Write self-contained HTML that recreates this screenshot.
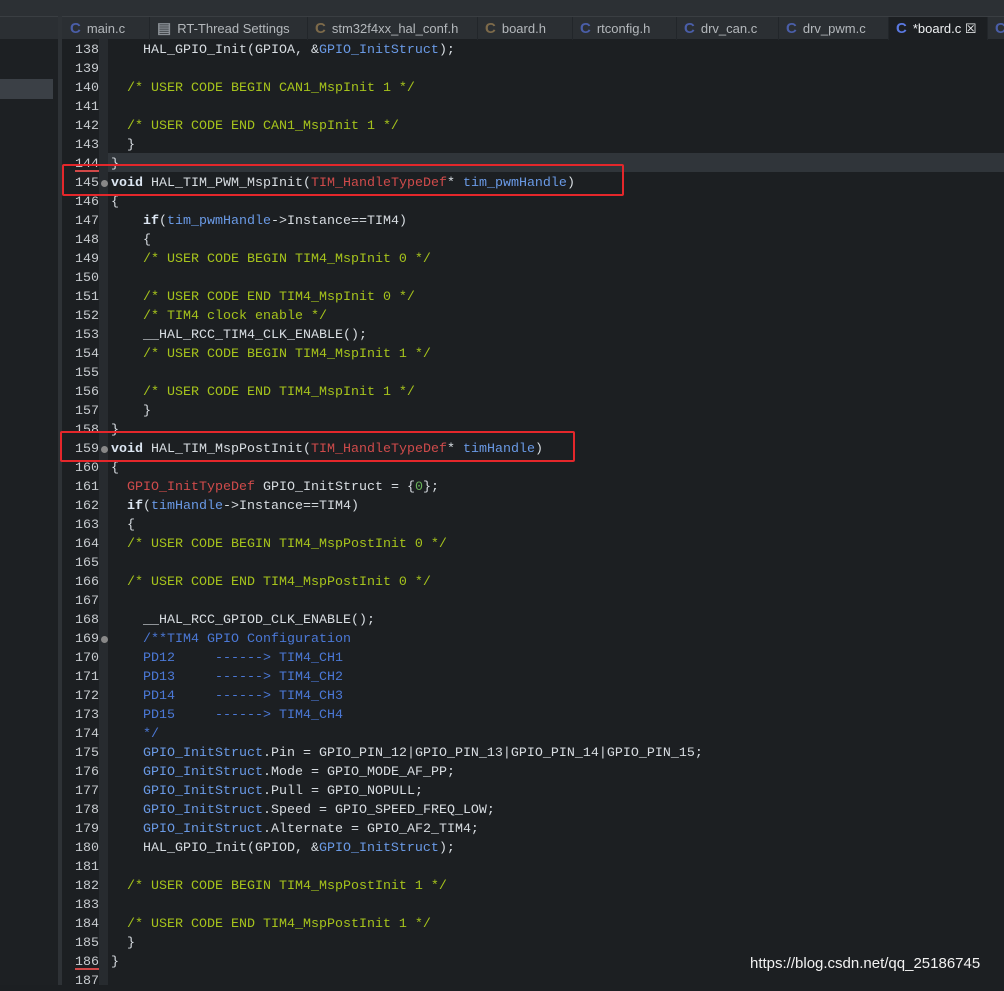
<!DOCTYPE html>
<html><head><meta charset="utf-8"><style>
*{margin:0;padding:0;box-sizing:border-box}
body{width:1004px;height:985px;background:#1c1f22;overflow:hidden;position:relative;font-family:"Liberation Mono",monospace}
#tool{position:absolute;left:0;top:0;width:1004px;height:16px;background:#2c3034}
#tabs{position:absolute;left:0;top:16px;width:1004px;height:23px;background:#2b2f33;border-top:1px solid #3a3e42}
.tab{position:absolute;top:0;height:23px;font:13px "Liberation Sans",sans-serif;color:#b4b8bc;line-height:23px;border-right:1px solid #22262a;white-space:nowrap}
.tab b{color:#4a5ea8;font:bold 15px "Liberation Sans",sans-serif;margin:0 6px 0 7px}
#left{position:absolute;left:0;top:39px;width:58px;height:946px;background:#1d2023}
#sep{position:absolute;left:58px;top:16px;width:4px;height:969px;background:#2e3236}
#sel{position:absolute;left:0;top:79px;width:53px;height:20px;background:#3b4046}
#gut{position:absolute;left:99px;top:39px;width:9px;height:946px;background:#272b2f}
#cur{position:absolute;left:108px;top:153px;width:896px;height:19px;background:#30353a}
#code{position:absolute;left:0;top:41px;font-size:13.33px;line-height:19px;color:#d8dde2}
.l{height:19px;position:relative;overflow:visible}
.n{position:absolute;left:0;top:0;width:99px;text-align:right;color:#c8ccd0}
.t{position:absolute;left:111px;top:0;white-space:pre}
.c{color:#a6c31c}.k{color:#dce6f2;font-weight:bold}.r{color:#cf4b4b}.b{color:#6a9ae6}.d{color:#4b78d6}.g{color:#69b25a}
.box{position:absolute;border:2px solid #e4272b;border-radius:2px}
#wm{position:absolute;left:750px;top:955px;font:15px "Liberation Sans",sans-serif;color:#f2f2f2}
.fold{position:absolute;left:101px;top:6px;width:7px;height:7px;border-radius:50%;background:#888}
</style></head><body>
<div id="tool"></div>
<div id="tabs">
<div class="tab" style="left:63px;width:87px"><b>C</b>main.c</div>
<div class="tab" style="left:150px;width:158px"><b style="color:#8a8f95">▤</b>RT-Thread Settings</div>
<div class="tab" style="left:308px;width:170px"><b style="color:#7d6a4a">C</b>stm32f4xx_hal_conf.h</div>
<div class="tab" style="left:478px;width:95px"><b style="color:#7d6a4a">C</b>board.h</div>
<div class="tab" style="left:573px;width:104px"><b>C</b>rtconfig.h</div>
<div class="tab" style="left:677px;width:102px"><b>C</b>drv_can.c</div>
<div class="tab" style="left:779px;width:110px"><b>C</b>drv_pwm.c</div>
<div class="tab" style="left:889px;width:99px;background:#1c1f22;color:#eef0f2"><b style="color:#5a78e0">C</b>*board.c ☒</div>
<div class="tab" style="left:988px;width:20px"><b>C</b></div>
</div>
<div id="left"></div><div id="sel"></div><div id="sep"></div>
<div id="gut"></div><div id="cur"></div>
<div id="code"><div class="l"><span class="n">138</span><span class="t">    HAL_GPIO_Init(GPIOA, &amp;<span class="b">GPIO_InitStruct</span>);</span></div><div class="l"><span class="n">139</span></div><div class="l"><span class="n">140</span><span class="t c">  /* USER CODE BEGIN CAN1_MspInit 1 */</span></div><div class="l"><span class="n">141</span></div><div class="l"><span class="n">142</span><span class="t c">  /* USER CODE END CAN1_MspInit 1 */</span></div><div class="l"><span class="n">143</span><span class="t">  }</span></div><div class="l"><span class="n">144</span><span class="t">}</span></div><div class="l"><span class="n">145</span><span class="fold"></span><span class="t"><span class="k">void</span> HAL_TIM_PWM_MspInit(<span class="r">TIM_HandleTypeDef</span>* <span class="b">tim_pwmHandle</span>)</span></div><div class="l"><span class="n">146</span><span class="t">{</span></div><div class="l"><span class="n">147</span><span class="t">    <span class="k">if</span>(<span class="b">tim_pwmHandle</span>-&gt;Instance==TIM4)</span></div><div class="l"><span class="n">148</span><span class="t">    {</span></div><div class="l"><span class="n">149</span><span class="t c">    /* USER CODE BEGIN TIM4_MspInit 0 */</span></div><div class="l"><span class="n">150</span></div><div class="l"><span class="n">151</span><span class="t c">    /* USER CODE END TIM4_MspInit 0 */</span></div><div class="l"><span class="n">152</span><span class="t c">    /* TIM4 clock enable */</span></div><div class="l"><span class="n">153</span><span class="t">    __HAL_RCC_TIM4_CLK_ENABLE();</span></div><div class="l"><span class="n">154</span><span class="t c">    /* USER CODE BEGIN TIM4_MspInit 1 */</span></div><div class="l"><span class="n">155</span></div><div class="l"><span class="n">156</span><span class="t c">    /* USER CODE END TIM4_MspInit 1 */</span></div><div class="l"><span class="n">157</span><span class="t">    }</span></div><div class="l"><span class="n">158</span><span class="t">}</span></div><div class="l"><span class="n">159</span><span class="fold"></span><span class="t"><span class="k">void</span> HAL_TIM_MspPostInit(<span class="r">TIM_HandleTypeDef</span>* <span class="b">timHandle</span>)</span></div><div class="l"><span class="n">160</span><span class="t">{</span></div><div class="l"><span class="n">161</span><span class="t">  <span class="r">GPIO_InitTypeDef</span> GPIO_InitStruct = {<span class="g">0</span>};</span></div><div class="l"><span class="n">162</span><span class="t">  <span class="k">if</span>(<span class="b">timHandle</span>-&gt;Instance==TIM4)</span></div><div class="l"><span class="n">163</span><span class="t">  {</span></div><div class="l"><span class="n">164</span><span class="t c">  /* USER CODE BEGIN TIM4_MspPostInit 0 */</span></div><div class="l"><span class="n">165</span></div><div class="l"><span class="n">166</span><span class="t c">  /* USER CODE END TIM4_MspPostInit 0 */</span></div><div class="l"><span class="n">167</span></div><div class="l"><span class="n">168</span><span class="t">    __HAL_RCC_GPIOD_CLK_ENABLE();</span></div><div class="l"><span class="n">169</span><span class="fold"></span><span class="t d">    /**TIM4 GPIO Configuration</span></div><div class="l"><span class="n">170</span><span class="t d">    PD12     ------&gt; TIM4_CH1</span></div><div class="l"><span class="n">171</span><span class="t d">    PD13     ------&gt; TIM4_CH2</span></div><div class="l"><span class="n">172</span><span class="t d">    PD14     ------&gt; TIM4_CH3</span></div><div class="l"><span class="n">173</span><span class="t d">    PD15     ------&gt; TIM4_CH4</span></div><div class="l"><span class="n">174</span><span class="t d">    */</span></div><div class="l"><span class="n">175</span><span class="t">    <span class="b">GPIO_InitStruct</span>.Pin = GPIO_PIN_12|GPIO_PIN_13|GPIO_PIN_14|GPIO_PIN_15;</span></div><div class="l"><span class="n">176</span><span class="t">    <span class="b">GPIO_InitStruct</span>.Mode = GPIO_MODE_AF_PP;</span></div><div class="l"><span class="n">177</span><span class="t">    <span class="b">GPIO_InitStruct</span>.Pull = GPIO_NOPULL;</span></div><div class="l"><span class="n">178</span><span class="t">    <span class="b">GPIO_InitStruct</span>.Speed = GPIO_SPEED_FREQ_LOW;</span></div><div class="l"><span class="n">179</span><span class="t">    <span class="b">GPIO_InitStruct</span>.Alternate = GPIO_AF2_TIM4;</span></div><div class="l"><span class="n">180</span><span class="t">    HAL_GPIO_Init(GPIOD, &amp;<span class="b">GPIO_InitStruct</span>);</span></div><div class="l"><span class="n">181</span></div><div class="l"><span class="n">182</span><span class="t c">  /* USER CODE BEGIN TIM4_MspPostInit 1 */</span></div><div class="l"><span class="n">183</span></div><div class="l"><span class="n">184</span><span class="t c">  /* USER CODE END TIM4_MspPostInit 1 */</span></div><div class="l"><span class="n">185</span><span class="t">  }</span></div><div class="l"><span class="n">186</span><span class="t">}</span></div><div class="l"><span class="n">187</span></div></div>
<div style="position:absolute;left:75px;top:170px;width:24px;height:2px;background:#d04848"></div>
<div style="position:absolute;left:75px;top:968px;width:24px;height:2px;background:#d04848"></div>
<div class="box" style="left:62px;top:164px;width:562px;height:32px"></div>
<div class="box" style="left:60px;top:431px;width:515px;height:31px"></div>
<div id="wm">https://blog.csdn.net/qq_25186745</div>
</body></html>
